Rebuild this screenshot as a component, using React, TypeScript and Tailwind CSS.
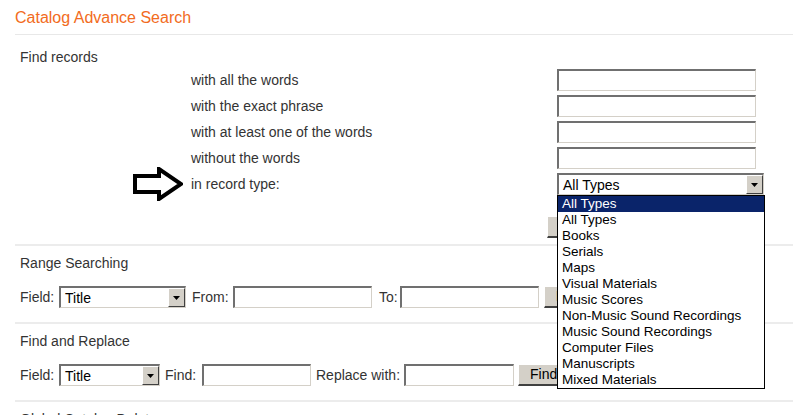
import React from "react";

const recordTypes = [
  "All Types",
  "Books",
  "Serials",
  "Maps",
  "Visual Materials",
  "Music Scores",
  "Non-Music Sound Recordings",
  "Music Sound Recordings",
  "Computer Files",
  "Manuscripts",
  "Mixed Materials",
];

const boxCls =
  "bg-white border-t-2 border-l-2 border-r border-b border-t-[#707070] border-l-[#707070] border-r-[#d4d0c8] border-b-[#d4d0c8]";

const TextBox = ({ w }: { w: string }) => <div className={`${boxCls} h-[22px] ${w}`} />;

const ArrowBtn = () => (
  <div className="flex h-full w-[17px] items-center justify-center bg-[#d4d0c8] border-t border-l border-t-white border-l-white border-b border-r border-b-[#404040] border-r-[#404040]">
    <svg width="7" height="4" viewBox="0 0 7 4">
      <path d="M0 0h7L3.5 4z" fill="#000" />
    </svg>
  </div>
);

const SelectBox = ({
  w,
  value,
  children,
}: {
  w: string;
  value: string;
  children?: React.ReactNode;
}) => (
  <div className={`relative ${w}`}>
    <div className={`${boxCls} flex h-[22px] items-center justify-between`}>
      <span className="pl-[4px] text-[14px] leading-none text-black">{value}</span>
      <ArrowBtn />
    </div>
    {children}
  </div>
);

const Button = ({ label, w }: { label: string; w: string }) => (
  <div
    className={`flex h-[22px] ${w} items-center pl-[11px] text-[14px] text-black bg-[#d4d0c8] border-t border-l border-t-white border-l-white border-b-2 border-r-2 border-b-[#404040] border-r-[#404040]`}
  >
    {label}
  </div>
);

const Divider = () => <div className="h-[2px] bg-[#ececec]" />;

const FindRow = ({ label, arrow }: { label: string; arrow?: boolean }) => (
  <div className="flex h-[26px] items-center">
    <div className="flex w-[176px] justify-end pr-[8px]">
      {arrow && (
        <svg width="50" height="34" viewBox="0 0 50 34" className="my-[-4px]">
          <polygon
            points="2,9 26,9 26,2 48,17 26,32 26,25 2,25"
            fill="white"
            stroke="black"
            strokeWidth="4"
          />
        </svg>
      )}
    </div>
    <div className="w-[366px]">{label}</div>
    {arrow ? (
      <SelectBox w="w-[207px]" value="All Types">
        <div className="absolute left-0 top-full z-10 w-[208px] border border-black bg-white text-[13.5px] text-black">
          <div className="h-[16px] bg-[#0a246a] pl-[4px] leading-[16px] text-white">All Types</div>
          {recordTypes.map((t) => (
            <div key={t} className="h-[16px] pl-[4px] leading-[16px]">
              {t}
            </div>
          ))}
        </div>
      </SelectBox>
    ) : (
      <TextBox w="w-[199px]" />
    )}
  </div>
);

export default function App() {
  return (
    <div className="min-h-[415px] bg-white pl-[15px] font-['Liberation_Sans',Arial,sans-serif] text-[14px] text-[#333]">
      <div className="h-[35px] border-b border-[#e8e8e8] pt-[8px] text-[16px] leading-[20px] text-[#f26b21]">
        Catalog Advance Search
      </div>

      <div className="pl-[5px] pt-[14px] leading-[16px]">Find records</div>
      <div className="mt-[2px]">
        <FindRow label="with all the words" />
        <FindRow label="with the exact phrase" />
        <FindRow label="with at least one of the words" />
        <FindRow label="without the words" />
        <FindRow label="in record type:" arrow />
      </div>
      <div className="mb-[6px] mt-[19px] flex pl-[532px]">
        <Button label="Search" w="w-[80px]" />
      </div>
      <Divider />

      <div className="pl-[5px] pt-[9px] leading-[16px]">Range Searching</div>
      <div className="mb-[14px] mt-[15px] flex h-[22px] items-center pl-[5px]">
        <span className="w-[39px]">Field:</span>
        <SelectBox w="w-[127px]" value="Title" />
        <span className="ml-[6px] w-[41px]">From:</span>
        <TextBox w="w-[139px]" />
        <span className="ml-[7px] w-[21px]">To:</span>
        <TextBox w="w-[139px]" />
        <div className="ml-[5px]">
          <Button label="Find" w="w-[80px]" />
        </div>
      </div>
      <Divider />

      <div className="pl-[5px] pt-[9px] leading-[16px]">Find and Replace</div>
      <div className="mb-[14px] mt-[15px] flex h-[22px] items-center pl-[5px]">
        <span className="w-[39px]">Field:</span>
        <SelectBox w="w-[101px]" value="Title" />
        <span className="ml-[5px] w-[37px]">Find:</span>
        <TextBox w="w-[109px]" />
        <span className="ml-[5px] w-[88px]">Replace with:</span>
        <TextBox w="w-[110px]" />
        <div className="ml-[4px]">
          <Button label="Find" w="w-[80px]" />
        </div>
      </div>
      <Divider />

      <div className="pl-[5px] pt-[9px] leading-[16px]">Global Catalog Delete</div>
    </div>
  );
}
